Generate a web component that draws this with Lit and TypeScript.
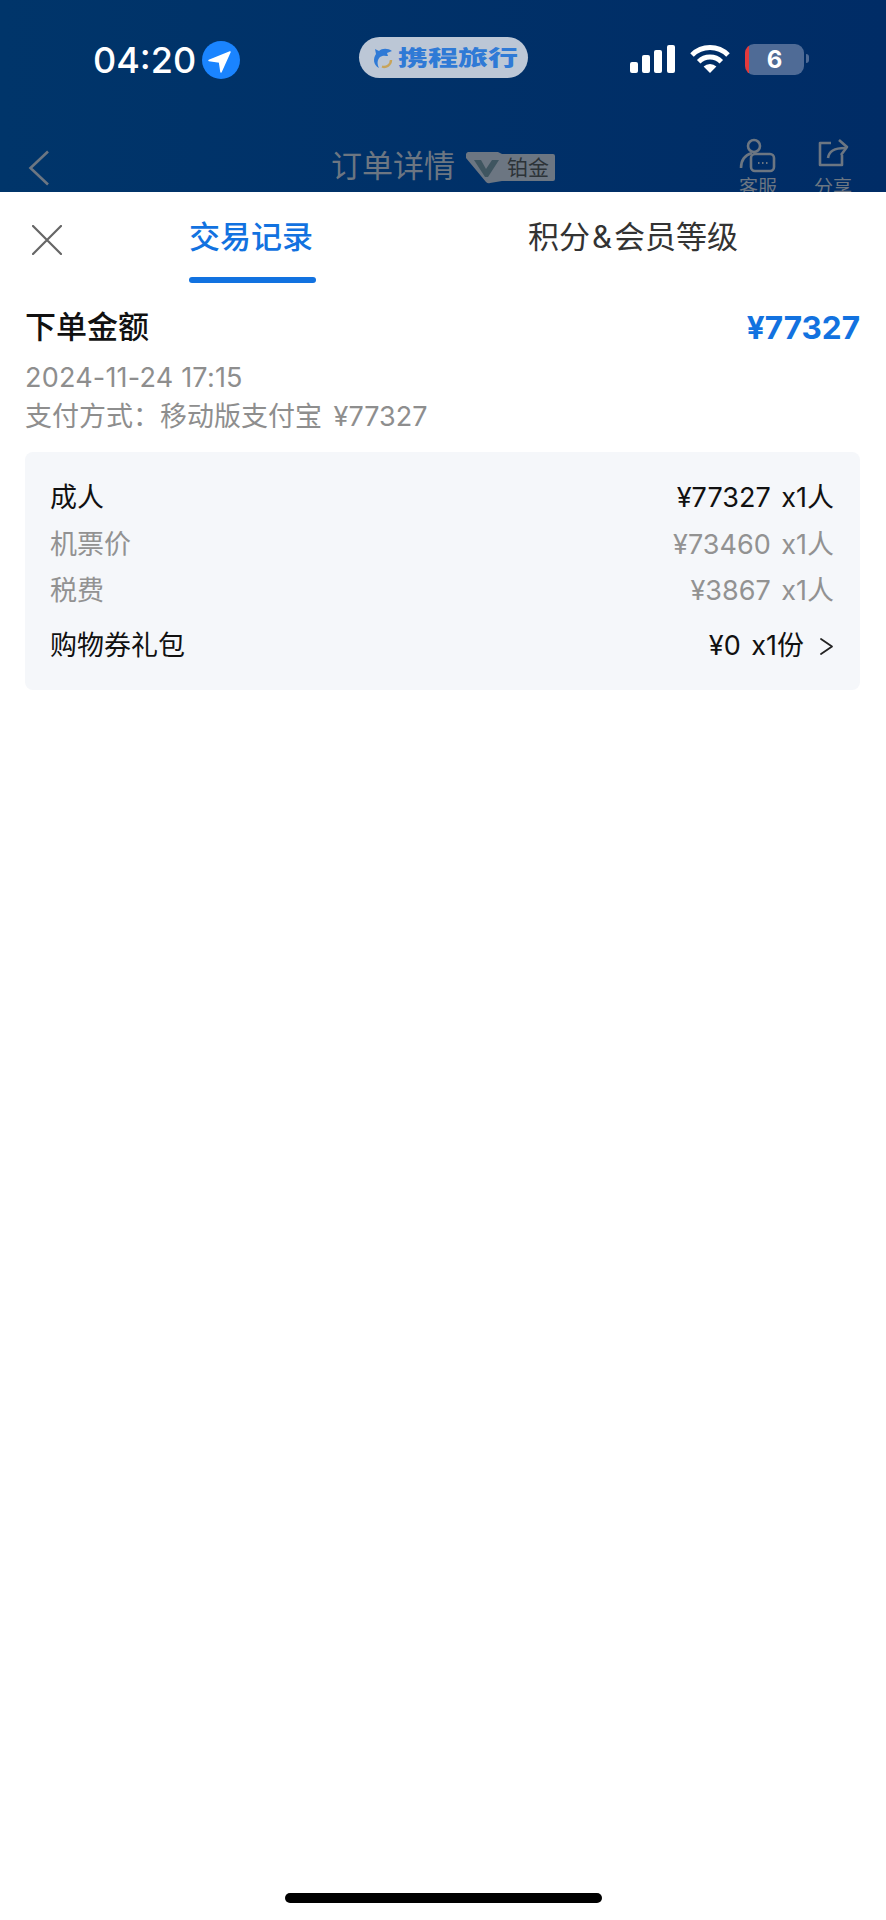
import { LitElement, html, css, svg } from "lit"
import { customElement } from "lit/decorators.js"

const rows = [
  { label: "成人", value: "¥77327 x1人", muted: false },
  { label: "机票价", value: "¥73460 x1人", muted: true },
  { label: "税费", value: "¥3867 x1人", muted: true },
]

const chevron = svg`<path d="M2 2 L13 9.5 L2 17" fill="none" stroke="#222" stroke-width="1.8" stroke-linecap="round" stroke-linejoin="round"/>`

@customElement("app-root")
export class AppRoot extends LitElement {
  static styles = css`
    :host {
      display: flex;
      flex-direction: column;
      height: 1920px;
      overflow: hidden;
      background: #fff;
      font-family: Inter, "Noto Sans CJK SC", sans-serif;
    }
    svg { display: block; flex: none; }

    .header {
      height: 192px;
      flex: none;
      overflow: hidden;
      background: linear-gradient(90deg, #00356a, #002c66);
    }
    .status {
      height: 120px;
      display: flex;
      align-items: flex-start;
      box-sizing: border-box;
      padding-top: 37px;
    }
    .time {
      margin-left: 93px;
      width: 104px;
      color: #fff;
      font-size: 36px;
      font-weight: 500;
      line-height: 46px;
    }
    .loc { margin: 4px 0 0 5px; }
    .logo {
      margin-left: 119px;
      width: 169px;
      height: 41px;
      border-radius: 21px;
      background: #bcc7d6;
      display: flex;
      align-items: center;
      padding-left: 12px;
      box-sizing: border-box;
    }
    .logo-text {
      margin-left: 5px;
      display: block;
      width: 84px;
      white-space: nowrap;
      font-size: 21px;
      line-height: 41px;
      font-weight: 900;
      color: #2f7ad6;
      transform: scaleX(1.43);
      transform-origin: left center;
    }
    .signal { margin: 8px 0 0 102px; }
    .wifi { margin: 8px 0 0 15px; }
    .battery {
      margin: 7px 0 0 15px;
      width: 59px;
      height: 31px;
      border-radius: 9px;
      background: linear-gradient(90deg, #e23a3c 4px, #4f6b96 4px);
      color: #fff;
      font-size: 24px;
      font-weight: 700;
      line-height: 31px;
      text-align: center;
    }
    .nub {
      margin: 17px 0 0 2px;
      width: 3px;
      height: 9px;
      border-radius: 0 4px 4px 0;
      background: #4f6b96;
    }

    .nav {
      height: 72px;
      display: flex;
      align-items: flex-start;
    }
    .back { margin: 30px 0 0 28px; }
    .title {
      margin: 26px 0 0 281px;
      font-size: 31px;
      line-height: 40px;
      color: #6c7682;
      white-space: nowrap;
    }
    .badge {
      margin: 32px 0 0 11px;
      position: relative;
      width: 90px;
      height: 32px;
    }
    .badge-text {
      position: absolute;
      left: 41px;
      top: 1px;
      font-size: 21px;
      line-height: 29px;
      color: #2c3338;
    }
    .action {
      width: 50px;
      display: flex;
      flex-direction: column;
      align-items: center;
      color: #6c7682;
      font-size: 19px;
      line-height: 22px;
      white-space: nowrap;
    }
    .action span { margin-top: 3px; }
    .action.service { margin: 18px 0 0 177px; }
    .action.share { margin: 18px 0 0 25px; }

    .sheet {
      flex: 1;
      display: flex;
      flex-direction: column;
      background: #fff;
      border-radius: 24px 24px 0 0;
    }
    .tabs {
      height: 91px;
      flex: none;
      display: flex;
      align-items: flex-start;
    }
    .close { margin: 33px 0 0 32px; }
    .tab {
      margin-top: 25px;
      font-size: 31px;
      line-height: 40px;
      white-space: nowrap;
      color: #333;
    }
    .tab.active {
      position: relative;
      margin-left: 127px;
      width: 127px;
      color: #1272e0;
      font-weight: 500;
    }
    .tab.active::after {
      content: "";
      position: absolute;
      left: 0;
      right: 0;
      top: 60px;
      height: 6px;
      border-radius: 3px;
      background: #1272e0;
    }
    .tab.other { margin-left: 212px; }
    .amp { margin: 0 2px; }

    .body {
      padding: 21px 26px 0 25px;
      flex: 1;
    }
    .summary {
      display: flex;
      justify-content: space-between;
      align-items: center;
      height: 40px;
    }
    .summary-title {
      font-size: 31px;
      font-weight: 500;
      color: #111;
    }
    .summary-amount {
      padding-top: 6px;
      font-size: 31.5px;
      font-weight: 700;
      color: #1272e0;
    }
    .meta {
      margin-top: 14px;
      font-size: 27px;
      line-height: 39px;
      color: #8e8e8e;
    }
    .date { letter-spacing: 0.2px; }
    .pay { word-spacing: 4px; }
    .panel {
      margin-top: 16px;
      width: 835px;
      height: 238px;
      box-sizing: border-box;
      padding: 23px 26px 0 25px;
      background: #f5f7fa;
      border-radius: 8px;
      font-size: 27px;
      line-height: 46px;
      word-spacing: 3px;
      color: #111;
      font-feature-settings: "calt" 0;
    }
    .row {
      display: flex;
      justify-content: space-between;
      align-items: center;
      height: 46px;
    }
    .row:first-child { margin-bottom: 1px; }
    .row.muted { color: #929292; }
    .row.link { margin-top: 9px; }
    .link-value {
      display: flex;
      align-items: center;
      gap: 15px;
    }
    .indicator {
      flex: none;
      align-self: center;
      width: 317px;
      height: 10px;
      margin-bottom: 17px;
      border-radius: 5px;
      background: #000;
    }
  `

  render() {
    return html`
      <div class="header">
        <div class="status">
          <span class="time">04:20</span>
          <svg class="loc" width="38" height="38" viewBox="0 0 38 38">
            <circle cx="19" cy="19" r="19" fill="#1a84ff"/>
            <path d="M28 11 L7 19.5 L17.5 21 L19 31 Z" fill="#fff" stroke="#fff" stroke-width="1.5" stroke-linejoin="round"/>
          </svg>
          <div class="logo">
            <svg width="22" height="22" viewBox="0 0 22 22">
              <path d="M21 4 C17 1 11 1 8 4 L4 2 L5 7 C2 11 2 18 8 21 C6 17 6 13 9 10 C12 8 15 9 17 9 L16 6 Z" fill="#2f7ad6"/>
              <path d="M11 19.5 C15 21 20 18 20 13" fill="none" stroke="#c8a45a" stroke-width="2.4"/>
            </svg>
            <span class="logo-text">携程旅行</span>
          </div>
          <svg class="signal" width="45" height="28" viewBox="0 0 45 28" fill="#fff">
            <rect x="0" y="17" width="8" height="11" rx="2"/>
            <rect x="12" y="10" width="8" height="18" rx="2"/>
            <rect x="24" y="5" width="8" height="23" rx="2"/>
            <rect x="37" y="0" width="8" height="28" rx="2"/>
          </svg>
          <svg class="wifi" width="40" height="28" viewBox="0 0 40 28" fill="none" stroke="#fff" stroke-width="5">
            <path d="M2 10 A25.5 25.5 0 0 1 38 10"/>
            <path d="M8.7 16.7 A16 16 0 0 1 31.3 16.7"/>
            <path d="M20 28 L13.6 21.6 A9 9 0 0 1 26.4 21.6 Z" fill="#fff" stroke="none"/>
          </svg>
          <div class="battery">6</div>
          <div class="nub"></div>
        </div>
        <div class="nav">
          <svg class="back" width="22" height="36" viewBox="0 0 22 36">
            <path d="M20 1.5 L2.5 18 L20 34.5" fill="none" stroke="#6c7682" stroke-width="2.6"/>
          </svg>
          <span class="title">订单详情</span>
          <div class="badge">
            <svg width="90" height="32" viewBox="0 0 90 32">
              <path d="M2 0 H32 L36 2 H87 Q89 2 89 4 V27 Q89 29 87 29 H36 L24 31 Q22 32 20 30 L0 6 Q-1 1 2 0 Z" fill="#6c7682"/>
              <path d="M8 8 H15 L20 17 L26 8 H33 L22 25 H19 Z" fill="#3f5560"/>
            </svg>
            <span class="badge-text">铂金</span>
          </div>
          <div class="action service">
            <svg width="38" height="36" viewBox="0 0 38 36" fill="none" stroke="#6c7682" stroke-width="2.6">
              <circle cx="15" cy="8" r="6"/>
              <path d="M2 30 C2 22 6 17 13 15"/>
              <rect x="12" y="16" width="23" height="17" rx="4"/>
              <path d="M19 25 h1.5 M23 25 h1.5 M27 25 h1.5" stroke-width="2"/>
            </svg>
            <span>客服</span>
          </div>
          <div class="action share">
            <svg width="36" height="36" viewBox="0 0 36 36" fill="none" stroke="#6c7682" stroke-width="2.6" stroke-linejoin="round">
              <path d="M16 5 H5 V27 H27 V17"/>
              <path d="M13 20 C14 13 19 10 30 10"/>
              <path d="M24 2 L32 9 L26 17"/>
            </svg>
            <span>分享</span>
          </div>
        </div>
      </div>

      <div class="sheet">
        <div class="tabs">
          <svg class="close" width="30" height="30" viewBox="0 0 30 30">
            <path d="M1 1 L29 29 M29 1 L1 29" stroke="#666" stroke-width="2.2" stroke-linecap="round"/>
          </svg>
          <div class="tab active">交易记录</div>
          <div class="tab other">积分<span class="amp">&</span>会员等级</div>
        </div>
        <div class="body">
          <div class="summary">
            <span class="summary-title">下单金额</span>
            <span class="summary-amount">¥77327</span>
          </div>
          <div class="meta">
            <div class="date">2024-11-24 17:15</div>
            <div class="pay">支付方式：移动版支付宝 ¥77327</div>
          </div>
          <div class="panel">
            ${rows.map(
              (r) => html`
                <div class="row ${r.muted ? "muted" : ""}">
                  <span>${r.label}</span>
                  <span>${r.value}</span>
                </div>
              `
            )}
            <div class="row link">
              <span>购物券礼包</span>
              <span class="link-value">
                ¥0 x1份
                <svg width="15" height="19" viewBox="0 0 15 19">${chevron}</svg>
              </span>
            </div>
          </div>
        </div>
        <div class="indicator"></div>
      </div>
    `
  }
}
